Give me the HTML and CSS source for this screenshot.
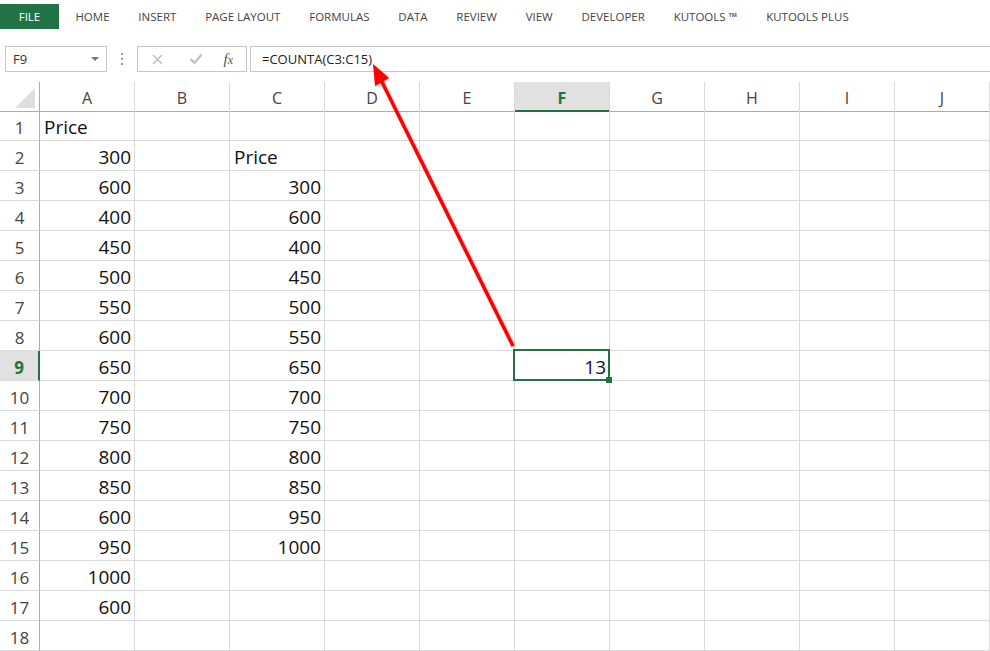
FILE: index.html
```html
<!DOCTYPE html>
<html lang="en">
<head>
  <meta charset="UTF-8">
  <title>COUNTA - Excel</title>
  <link rel="stylesheet" href="styles.css">
</head>
<body>
  <div class="ribbon">
    <span class="tab file">FILE</span>
    <span class="tab">HOME</span>
    <span class="tab">INSERT</span>
    <span class="tab">PAGE LAYOUT</span>
    <span class="tab">FORMULAS</span>
    <span class="tab">DATA</span>
    <span class="tab">REVIEW</span>
    <span class="tab">VIEW</span>
    <span class="tab">DEVELOPER</span>
    <span class="tab">KUTOOLS &trade;</span>
    <span class="tab">KUTOOLS PLUS</span>
  </div>

  <div class="fbar">
    <div class="namebox">
      <span>F9</span>
      <span class="drop"></span>
    </div>
    <div class="dots"><i></i><i></i><i></i></div>
    <div class="fxbox">
      <span class="btn"><svg width="11" height="11" viewBox="0 0 11 11"><path d="M1 1 L10 10 M10 1 L1 10" stroke="#b9b9b9" stroke-width="1.3" fill="none"/></svg></span>
      <span class="btn check"><svg width="14" height="12" viewBox="0 0 14 12"><path d="M1.5 6 L5.5 10 L12.5 1.5" stroke="#bdbdbd" stroke-width="2" fill="none"/></svg></span>
      <span class="btn fx">f<span class="x">x</span></span>
    </div>
    <div class="formula">=COUNTA(C3:C15)</div>
  </div>

  <div class="sheet">
    <div class="row head">
      <div class="corner"><span class="tri"></span></div>
      <div>A</div><div>B</div><div>C</div><div>D</div><div>E</div><div class="on">F</div><div>G</div><div>H</div><div>I</div><div>J</div>
    </div>
    <div class="row"><div class="num">1</div><div>Price</div><div></div><div></div><div></div><div></div><div></div><div></div><div></div><div></div><div></div></div>
    <div class="row"><div class="num">2</div><div class="n">300</div><div></div><div>Price</div><div></div><div></div><div></div><div></div><div></div><div></div><div></div></div>
    <div class="row"><div class="num">3</div><div class="n">600</div><div></div><div class="n">300</div><div></div><div></div><div></div><div></div><div></div><div></div><div></div></div>
    <div class="row"><div class="num">4</div><div class="n">400</div><div></div><div class="n">600</div><div></div><div></div><div></div><div></div><div></div><div></div><div></div></div>
    <div class="row"><div class="num">5</div><div class="n">450</div><div></div><div class="n">400</div><div></div><div></div><div></div><div></div><div></div><div></div><div></div></div>
    <div class="row"><div class="num">6</div><div class="n">500</div><div></div><div class="n">450</div><div></div><div></div><div></div><div></div><div></div><div></div><div></div></div>
    <div class="row"><div class="num">7</div><div class="n">550</div><div></div><div class="n">500</div><div></div><div></div><div></div><div></div><div></div><div></div><div></div></div>
    <div class="row"><div class="num">8</div><div class="n">600</div><div></div><div class="n">550</div><div></div><div></div><div></div><div></div><div></div><div></div><div></div></div>
    <div class="row"><div class="num on">9</div><div class="n">650</div><div></div><div class="n">650</div><div></div><div></div><div class="n active">13</div><div></div><div></div><div></div><div></div></div>
    <div class="row"><div class="num">10</div><div class="n">700</div><div></div><div class="n">700</div><div></div><div></div><div></div><div></div><div></div><div></div><div></div></div>
    <div class="row"><div class="num">11</div><div class="n">750</div><div></div><div class="n">750</div><div></div><div></div><div></div><div></div><div></div><div></div><div></div></div>
    <div class="row"><div class="num">12</div><div class="n">800</div><div></div><div class="n">800</div><div></div><div></div><div></div><div></div><div></div><div></div><div></div></div>
    <div class="row"><div class="num">13</div><div class="n">850</div><div></div><div class="n">850</div><div></div><div></div><div></div><div></div><div></div><div></div><div></div></div>
    <div class="row"><div class="num">14</div><div class="n">600</div><div></div><div class="n">950</div><div></div><div></div><div></div><div></div><div></div><div></div><div></div></div>
    <div class="row"><div class="num">15</div><div class="n">950</div><div></div><div class="n">1000</div><div></div><div></div><div></div><div></div><div></div><div></div><div></div></div>
    <div class="row"><div class="num">16</div><div class="n">1000</div><div></div><div></div><div></div><div></div><div></div><div></div><div></div><div></div><div></div></div>
    <div class="row"><div class="num">17</div><div class="n">600</div><div></div><div></div><div></div><div></div><div></div><div></div><div></div><div></div><div></div></div>
    <div class="row"><div class="num">18</div><div></div><div></div><div></div><div></div><div></div><div></div><div></div><div></div><div></div><div></div></div>
  </div>

  <!-- annotation arrow drawn over the sheet -->
  <svg class="arrow" width="990" height="651" viewBox="0 0 990 651">
    <line x1="513" y1="346" x2="381" y2="80" stroke="#f00" stroke-width="3.5"/>
    <polygon points="373,64 389,78 375,86" fill="#f00"/>
  </svg>
</body>
</html>
```

FILE: styles.css
```css
* {
  margin: 0;
  padding: 0;
  box-sizing: border-box;
}

body {
  width: 990px;
  height: 651px;
  overflow: hidden;
  background: #fff;
  font-family: "Open Sans", "Noto Sans", sans-serif;
  color: #111;
  position: relative;
}

.ribbon {
  height: 34px;
  padding-top: 4px;
  display: flex;
  align-items: flex-start;
}

.tab {
  height: 25px;
  line-height: 25px;
  padding: 0 14.4px;
  font-size: 11.5px;
  color: #444;
  white-space: nowrap;
}

.tab.file {
  width: 59px;
  padding: 0;
  margin-right: 2px;
  text-align: center;
  background: #217346;
  color: #fff;
}

.fbar {
  margin-top: 12px;
  height: 26px;
  display: flex;
}

.namebox {
  margin-left: 5px;
  width: 102px;
  border: 1px solid #c6c6c6;
  display: flex;
  align-items: center;
  justify-content: space-between;
  padding: 0 7px 0 7px;
  font-size: 13px;
  color: #333;
}

.drop {
  width: 0;
  height: 0;
  border-left: 4px solid transparent;
  border-right: 4px solid transparent;
  border-top: 4px solid #777;
}

.dots {
  width: 30px;
  display: flex;
  flex-direction: column;
  align-items: center;
  justify-content: center;
  gap: 3px;
}

.dots i {
  width: 2px;
  height: 2px;
  background: #999;
}

.fxbox {
  width: 110px;
  border: 1px solid #c6c6c6;
  display: flex;
  align-items: center;
  padding-left: 2px;
}

.btn {
  width: 36px;
  display: flex;
  justify-content: center;
  align-items: center;
}

.btn.check {
  padding-left: 6px;
}

.fx {
  font-family: "Liberation Serif", serif;
  font-style: italic;
  font-size: 15px;
  color: #555;
  align-items: baseline;
}

.fx .x {
  font-size: 12px;
}

.formula {
  margin-left: 3px;
  flex: 1;
  border: 1px solid #c6c6c6;
  border-right: none;
  padding-left: 11px;
  font-size: 13px;
  line-height: 24px;
  color: #222;
}

.sheet {
  margin-top: 10px;
}

.row {
  display: grid;
  grid-template-columns: 40px repeat(10, 95px);
  height: 30px;
}

.row > div {
  border-right: 1px solid #dadada;
  border-bottom: 1px solid #dadada;
  padding: 4px 4px 0 4px;
  line-height: 25px;
  font-size: 19px;
  white-space: nowrap;
  position: relative;
}

.row > div.n {
  text-align: right;
  padding-right: 3px;
}

.row > div.num {
  text-align: center;
  padding: 5px 0 0 0;
  line-height: 24px;
  font-size: 17px;
  color: #444;
  border-right-color: #ababab;
}

.row > div.num.on {
  background: #e1e1e1;
  color: #217346;
  font-weight: bold;
  border-right: 2px solid #217346;
}

.row.head {
  height: 29px;
}

.row.head > div {
  text-align: center;
  padding: 4px 0 0 0;
  line-height: 24px;
  font-size: 16px;
  color: #444;
  border-bottom-color: #ababab;
}

.row.head > div.on {
  background: #e1e1e1;
  color: #217346;
  font-weight: bold;
  border-bottom: 2px solid #217346;
}

.row.head > div.corner {
  border-right-color: #ababab;
}

.tri {
  position: absolute;
  right: 4px;
  bottom: 3px;
  width: 0;
  height: 0;
  border-left: 20px solid transparent;
  border-bottom: 20px solid #dfdfdf;
}

.active::after {
  content: "";
  position: absolute;
  top: -2px;
  left: -2px;
  right: -1px;
  bottom: -1px;
  border: 2px solid #217346;
}

.active::before {
  content: "";
  position: absolute;
  right: -3px;
  bottom: -3px;
  width: 6px;
  height: 6px;
  background: #217346;
  z-index: 1;
}

.arrow {
  position: absolute;
  left: 0;
  top: 0;
  pointer-events: none;
  filter: drop-shadow(1px 1px 1px rgba(0, 0, 0, 0.3));
}
```
